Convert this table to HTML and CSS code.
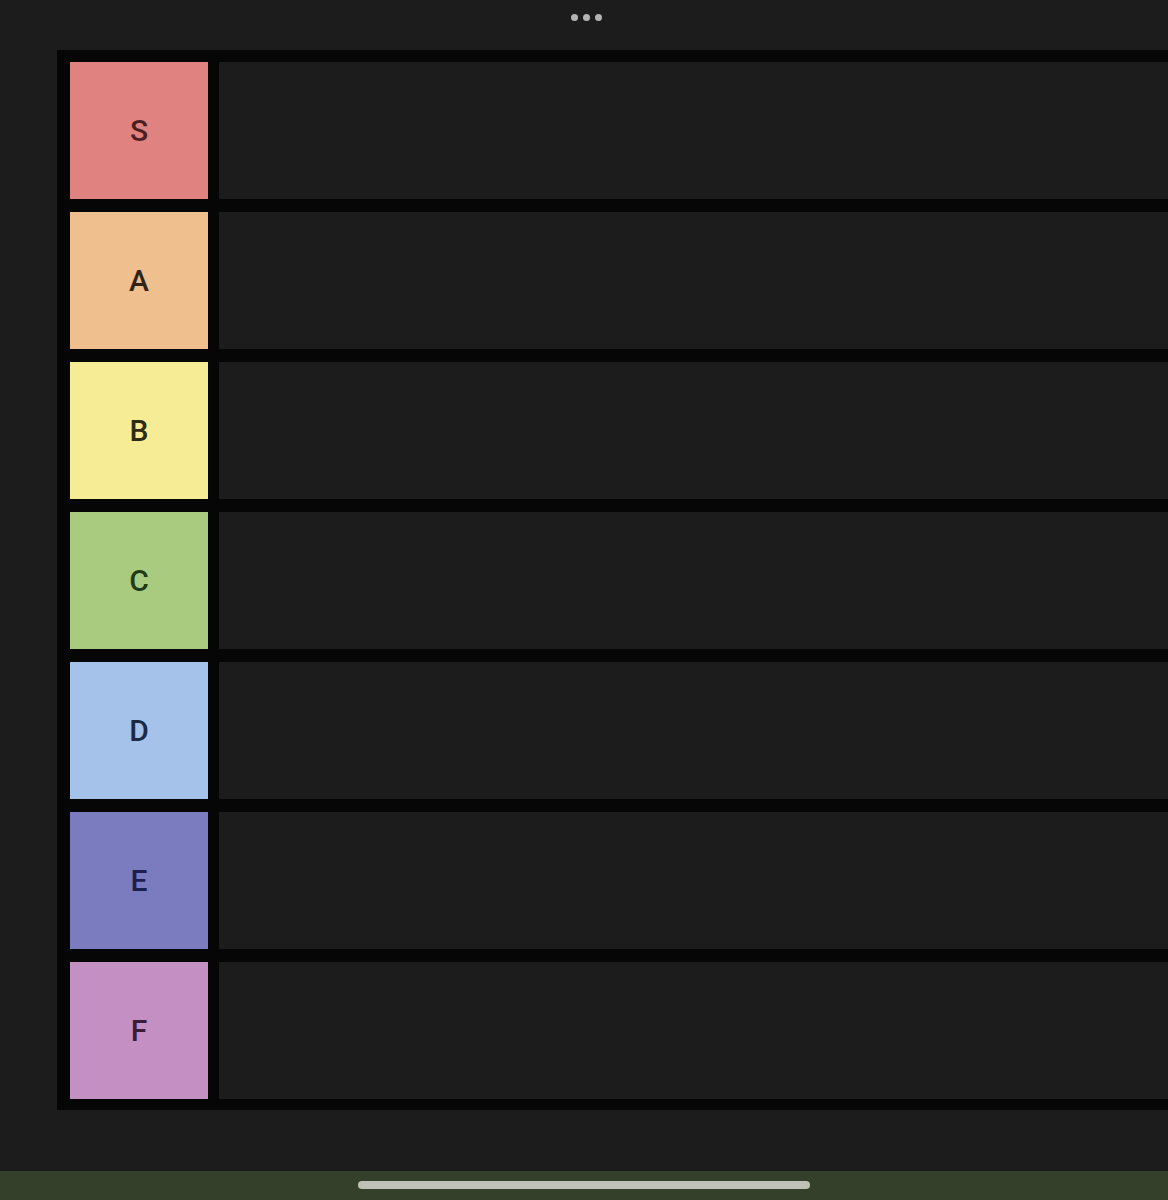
FILE: index.html
```html
<!DOCTYPE html>
<html lang="en">
<head>
<meta charset="utf-8">
<title>Tier list</title>
<link rel="stylesheet" href="styles.css">
</head>
<body>
<div class="page">
  <div class="topbar">
    <span class="dot"></span><span class="dot"></span><span class="dot"></span>
  </div>
  <div class="board">
    <div class="row"><div class="label tier-s">S</div><div class="cell"></div></div>
    <div class="row"><div class="label tier-a">A</div><div class="cell"></div></div>
    <div class="row"><div class="label tier-b">B</div><div class="cell"></div></div>
    <div class="row"><div class="label tier-c">C</div><div class="cell"></div></div>
    <div class="row"><div class="label tier-d">D</div><div class="cell"></div></div>
    <div class="row"><div class="label tier-e">E</div><div class="cell"></div></div>
    <div class="row"><div class="label tier-f">F</div><div class="cell"></div></div>
  </div>
  <div class="spacer"></div>
  <div class="homebar"><span class="pill"></span></div>
</div>
</body>
</html>
```
FILE: styles.css
```css
html, body {
  margin: 0;
  padding: 0;
  background: #1c1c1c;
}
body {
  font-family: Roboto, "Liberation Sans", Arial, sans-serif;
  width: 1168px;
  height: 1200px;
  overflow: hidden;
}
.page {
  display: flex;
  flex-direction: column;
  height: 1200px;
}
.topbar {
  height: 50px;
  display: flex;
  justify-content: center;
  align-items: flex-start;
  gap: 5px;
  padding-top: 14px;
  box-sizing: border-box;
  padding-left: 4px;
}
.dot {
  width: 7px;
  height: 7px;
  border-radius: 50%;
  background: #b3b3b3;
}
.board {
  margin-left: 57px;
  background: #060606;
  padding: 12px 0 11px 13px;
  display: flex;
  flex-direction: column;
  gap: 13px;
}
.row {
  display: flex;
  gap: 11px;
  height: 137px;
}
.label {
  width: 138px;
  flex: none;
  display: flex;
  align-items: center;
  justify-content: center;
  font-size: 30px;
  font-weight: 500;
}
.cell {
  flex: 1;
  background: #1c1c1c;
}
.tier-s { background: #e0827f; color: #4b1f22; }
.tier-a { background: #efc08e; color: #2f2416; }
.tier-b { background: #f6ec96; color: #2e2b14; }
.tier-c { background: #a8cb80; color: #1f3a16; }
.tier-d { background: #a4c2ea; color: #1c2a44; }
.tier-e { background: #7b7cc0; color: #1c1e4c; }
.tier-f { background: #c48fc2; color: #3a1c38; }
.spacer {
  flex: 1;
}
.homebar {
  height: 29px;
  background: #34402a;
  display: flex;
  justify-content: center;
  padding-top: 10px;
  box-sizing: border-box;
}
.pill {
  width: 452px;
  height: 8px;
  border-radius: 4px;
  background: #c0c2b8;
}
```
